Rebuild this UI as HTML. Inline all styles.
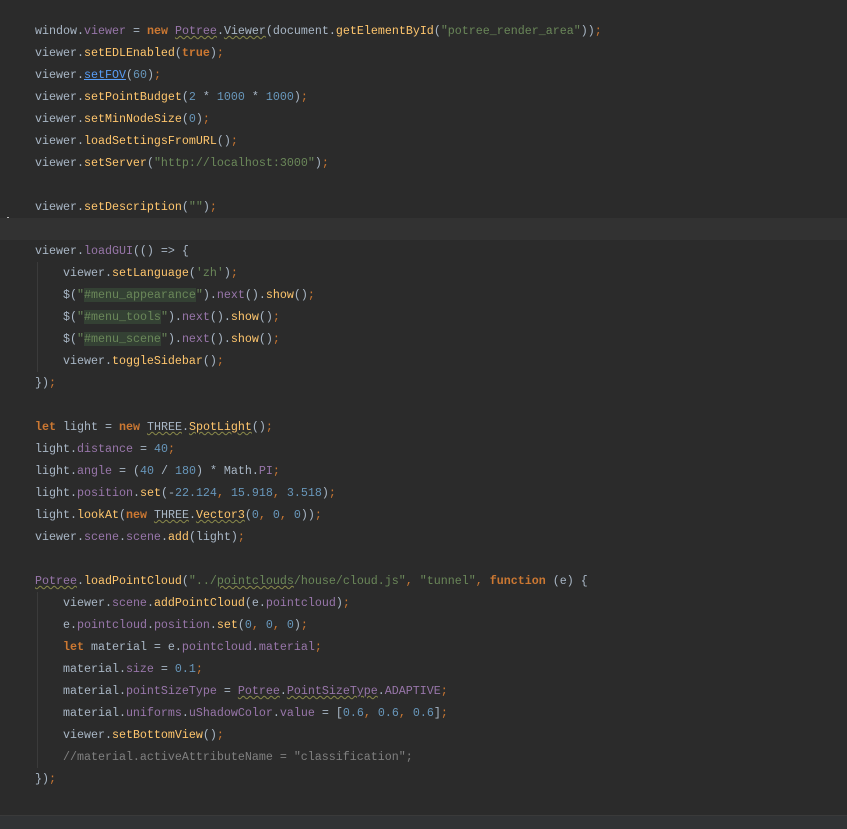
<!DOCTYPE html>
<html><head><meta charset="utf-8"><style>
html,body{margin:0;padding:0;width:847px;height:828px;background:#2b2b2b;overflow:hidden}
.ed{position:absolute;left:0;top:20px;width:847px}
.l{height:22px;line-height:22px;white-space:pre;font-family:"Liberation Mono",monospace;font-size:11.67px;color:#a9b7c6;padding-left:35px}
.cur{background:#323232}
.k{color:#cc7832;font-weight:bold}.p{color:#cc7832}.pr{color:#9876aa}.f{color:#ffc66d}.n{color:#6897bb}.s{color:#6a8759}.c{color:#808080}.u{color:#589df6;text-decoration:underline}
.h{background:#344134}
.w{text-decoration:underline wavy #8a8a4a;text-decoration-thickness:1px}
.g{position:absolute;width:1px;background:#3b3b3b}
.bar{position:absolute;left:0;top:815px;width:847px;height:13px;background:#313335;border-top:1px solid #3a3a3a}
</style></head><body>
<div class="g" style="left:37px;top:262px;height:110px"></div>
<div class="g" style="left:37px;top:592px;height:176px"></div>
<div style="position:absolute;left:7px;top:217px;width:2px;height:22px;background:#bbb"></div>
<div class="ed">
<div class="l">window.<span class="pr">viewer</span> = <span class="k">new</span> <span class="pr w">Potree</span>.<span class="w">Viewer</span>(document.<span class="f">getElementById</span>(<span class="s">"potree_render_area"</span>))<span class="p">;</span></div>
<div class="l">viewer.<span class="f">setEDLEnabled</span>(<span class="k">true</span>)<span class="p">;</span></div>
<div class="l">viewer.<span class="u">setFOV</span>(<span class="n">60</span>)<span class="p">;</span></div>
<div class="l">viewer.<span class="f">setPointBudget</span>(<span class="n">2</span> * <span class="n">1000</span> * <span class="n">1000</span>)<span class="p">;</span></div>
<div class="l">viewer.<span class="f">setMinNodeSize</span>(<span class="n">0</span>)<span class="p">;</span></div>
<div class="l">viewer.<span class="f">loadSettingsFromURL</span>()<span class="p">;</span></div>
<div class="l">viewer.<span class="f">setServer</span>(<span class="s">"http://localhost:3000"</span>)<span class="p">;</span></div>
<div class="l"> </div>
<div class="l">viewer.<span class="f">setDescription</span>(<span class="s">""</span>)<span class="p">;</span></div>
<div class="l cur"> </div>
<div class="l">viewer.<span class="pr">loadGUI</span>(() => {</div>
<div class="l">    viewer.<span class="f">setLanguage</span>(<span class="s">'zh'</span>)<span class="p">;</span></div>
<div class="l">    $(<span class="s">"<span class="h">#menu_appearance</span>"</span>).<span class="pr">next</span>().<span class="f">show</span>()<span class="p">;</span></div>
<div class="l">    $(<span class="s">"<span class="h">#menu_tools</span>"</span>).<span class="pr">next</span>().<span class="f">show</span>()<span class="p">;</span></div>
<div class="l">    $(<span class="s">"<span class="h">#menu_scene</span>"</span>).<span class="pr">next</span>().<span class="f">show</span>()<span class="p">;</span></div>
<div class="l">    viewer.<span class="f">toggleSidebar</span>()<span class="p">;</span></div>
<div class="l">})<span class="p">;</span></div>
<div class="l"> </div>
<div class="l"><span class="k">let</span> light = <span class="k">new</span> <span class="w">THREE</span>.<span class="f w">SpotLight</span>()<span class="p">;</span></div>
<div class="l">light.<span class="pr">distance</span> = <span class="n">40</span><span class="p">;</span></div>
<div class="l">light.<span class="pr">angle</span> = (<span class="n">40</span> / <span class="n">180</span>) * Math.<span class="pr">PI</span><span class="p">;</span></div>
<div class="l">light.<span class="pr">position</span>.<span class="f">set</span>(-<span class="n">22.124</span><span class="p">,</span> <span class="n">15.918</span><span class="p">,</span> <span class="n">3.518</span>)<span class="p">;</span></div>
<div class="l">light.<span class="f">lookAt</span>(<span class="k">new</span> <span class="w">THREE</span>.<span class="f w">Vector3</span>(<span class="n">0</span><span class="p">,</span> <span class="n">0</span><span class="p">,</span> <span class="n">0</span>))<span class="p">;</span></div>
<div class="l">viewer.<span class="pr">scene</span>.<span class="pr">scene</span>.<span class="f">add</span>(light)<span class="p">;</span></div>
<div class="l"> </div>
<div class="l"><span class="pr w">Potree</span>.<span class="f">loadPointCloud</span>(<span class="s">"../<span class="w">pointclouds</span>/house/cloud.js"</span><span class="p">,</span> <span class="s">"tunnel"</span><span class="p">,</span> <span class="k">function</span> (e) {</div>
<div class="l">    viewer.<span class="pr">scene</span>.<span class="f">addPointCloud</span>(e.<span class="pr">pointcloud</span>)<span class="p">;</span></div>
<div class="l">    e.<span class="pr">pointcloud</span>.<span class="pr">position</span>.<span class="f">set</span>(<span class="n">0</span><span class="p">,</span> <span class="n">0</span><span class="p">,</span> <span class="n">0</span>)<span class="p">;</span></div>
<div class="l">    <span class="k">let</span> material = e.<span class="pr">pointcloud</span>.<span class="pr">material</span><span class="p">;</span></div>
<div class="l">    material.<span class="pr">size</span> = <span class="n">0.1</span><span class="p">;</span></div>
<div class="l">    material.<span class="pr">pointSizeType</span> = <span class="pr w">Potree</span>.<span class="pr w">PointSizeType</span>.<span class="pr">ADAPTIVE</span><span class="p">;</span></div>
<div class="l">    material.<span class="pr">uniforms</span>.<span class="pr">uShadowColor</span>.<span class="pr">value</span> = [<span class="n">0.6</span><span class="p">,</span> <span class="n">0.6</span><span class="p">,</span> <span class="n">0.6</span>]<span class="p">;</span></div>
<div class="l">    viewer.<span class="f">setBottomView</span>()<span class="p">;</span></div>
<div class="l">    <span class="c">//material.activeAttributeName = "classification";</span></div>
<div class="l">})<span class="p">;</span></div>
</div>
<div class="bar"></div>
</body></html>
